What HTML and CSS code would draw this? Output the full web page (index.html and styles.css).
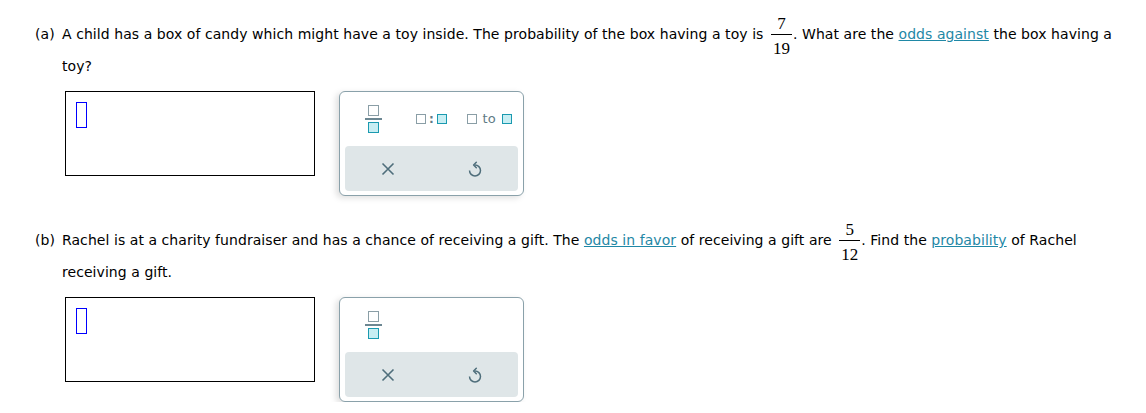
FILE: index.html
```html
<!DOCTYPE html>
<html>
<head>
<meta charset="utf-8">
<link rel="stylesheet" href="styles.css">
</head>
<body>
<div class="part part-a">
  <div class="label">(a)</div>
  <div class="body">
    <p class="q">A child has a box of candy which might have a toy inside. The probability of the box having a toy is <span class="frac"><span class="num">7</span><span class="den">19</span></span>. What are the <a class="link" href="#">odds against</a> the box having a toy?</p>
    <div class="answer">
      <div class="input"><span class="cursor"></span></div>
      <div class="palette">
        <div class="tools three">
          <div class="tool">
            <span class="ifrac"><span class="sq sq-g"></span><span class="bar"></span><span class="sq sq-t"></span></span>
          </div>
          <div class="tool">
            <span class="sq sm sq-g"></span><span class="colon">:</span><span class="sq sm sq-t"></span>
          </div>
          <div class="tool">
            <span class="sq sm sq-g"></span><span class="to">to</span><span class="sq sm sq-t"></span>
          </div>
        </div>
        <div class="actions">
          <div class="act"><svg width="14" height="14" viewBox="0 0 14 14"><path d="M1.5 1.5 L12.5 12.5 M12.5 1.5 L1.5 12.5" stroke="#4f6e7b" stroke-width="1.6" fill="none"/></svg></div>
          <div class="act"><svg width="14" height="18" viewBox="0 0 14 18"><path d="M7 5 A5.5 5.5 0 1 1 1.5 10.5" stroke="#4f6e7b" stroke-width="1.5" fill="none"/><path d="M8.3 2.3 L5.6 5 L8.3 7.7" stroke="#4f6e7b" stroke-width="1.5" fill="none" stroke-linejoin="round" stroke-linecap="round"/></svg></div>
        </div>
      </div>
    </div>
  </div>
</div>
<div class="part part-b">
  <div class="label">(b)</div>
  <div class="body">
    <p class="q">Rachel is at a charity fundraiser and has a chance of receiving a gift. The <a class="link" href="#">odds in favor</a> of receiving a gift are <span class="frac"><span class="num">5</span><span class="den">12</span></span>. Find the <a class="link" href="#">probability</a> of Rachel receiving a gift.</p>
    <div class="answer">
      <div class="input"><span class="cursor"></span></div>
      <div class="palette">
        <div class="tools three">
          <div class="tool">
            <span class="ifrac"><span class="sq sq-g"></span><span class="bar"></span><span class="sq sq-t"></span></span>
          </div>
        </div>
        <div class="actions">
          <div class="act"><svg width="14" height="14" viewBox="0 0 14 14"><path d="M1.5 1.5 L12.5 12.5 M12.5 1.5 L1.5 12.5" stroke="#4f6e7b" stroke-width="1.6" fill="none"/></svg></div>
          <div class="act"><svg width="14" height="18" viewBox="0 0 14 18"><path d="M7 5 A5.5 5.5 0 1 1 1.5 10.5" stroke="#4f6e7b" stroke-width="1.5" fill="none"/><path d="M8.3 2.3 L5.6 5 L8.3 7.7" stroke="#4f6e7b" stroke-width="1.5" fill="none" stroke-linejoin="round" stroke-linecap="round"/></svg></div>
        </div>
      </div>
    </div>
  </div>
</div>
</body>
</html>
```

FILE: styles.css
```css
html, body {
  margin: 0;
  padding: 0;
  background: #fff;
}
body {
  font-family: "DejaVu Sans", Verdana, sans-serif;
  font-size: 14px;
  letter-spacing: 0.06px;
  color: #000;
  padding: 18px 16px 0 35px;
}
.part {
  display: flex;
}
.part-b {
  margin-top: 28px;
}
.label {
  width: 27px;
  flex: none;
  line-height: 32px;
}
.body {
  flex: 1;
}
.q {
  margin: 0;
  line-height: 32px;
}
.link {
  color: #1f88a6;
  text-decoration: underline;
}
.frac {
  display: inline-block;
  text-align: center;
  vertical-align: -15px;
  font-family: "Liberation Serif", "Times New Roman", serif;
  font-size: 17px;
  letter-spacing: 0;
  margin: -8px 1px -8px 3px;
}
.frac .num {
  display: block;
  line-height: 20px;
  padding: 0 2px;
}
.frac .den {
  display: block;
  line-height: 18px;
  border-top: 1px solid #000;
  padding: 5px 2px 0 2px;
}
.answer {
  display: flex;
  align-items: flex-start;
  margin: 9px 0 0 3px;
  gap: 24px;
}
.input {
  box-sizing: border-box;
  width: 250px;
  height: 85px;
  border: 1px solid #000;
  padding: 10px 0 0 10px;
}
.cursor {
  display: block;
  box-sizing: border-box;
  width: 11px;
  height: 26px;
  border: 1px solid #0000ff;
}
.palette {
  box-sizing: border-box;
  width: 185px;
  height: 105px;
  border: 1px solid #8aa1aa;
  border-radius: 6px;
  padding: 0 5px 4px 5px;
  box-shadow: -3px 2px 6px rgba(0, 0, 0, 0.13);
  display: flex;
  flex-direction: column;
  background: #fff;
}
.tools {
  height: 54px;
  display: grid;
  grid-template-columns: repeat(3, 1fr);
}
.tool {
  display: flex;
  align-items: center;
  justify-content: center;
  gap: 3px;
}
.ifrac {
  display: flex;
  flex-direction: column;
  align-items: center;
  gap: 2px;
}
.sq {
  box-sizing: border-box;
  width: 11px;
  height: 11px;
  display: block;
}
.sq.sm {
  width: 10px;
  height: 10px;
}
.sq-g {
  border: 1.5px solid #8a9ea6;
  background: #fff;
}
.sq-t {
  border: 1.5px solid #1a9ab0;
  background: #c8eef3;
}
.bar {
  display: block;
  width: 17px;
  height: 2px;
  background: #6c8792;
}
.colon {
  color: #5f7b86;
  font-weight: bold;
  font-size: 12px;
  line-height: 10px;
}
.to {
  color: #5f7b86;
  font-size: 13px;
  line-height: 10px;
  margin: 0 3px;
}
.actions {
  flex: 1;
  background: #dfe6e8;
  border-radius: 4px;
  display: grid;
  grid-template-columns: 1fr 1fr;
}
.act {
  display: flex;
  align-items: center;
  justify-content: center;
}
```
